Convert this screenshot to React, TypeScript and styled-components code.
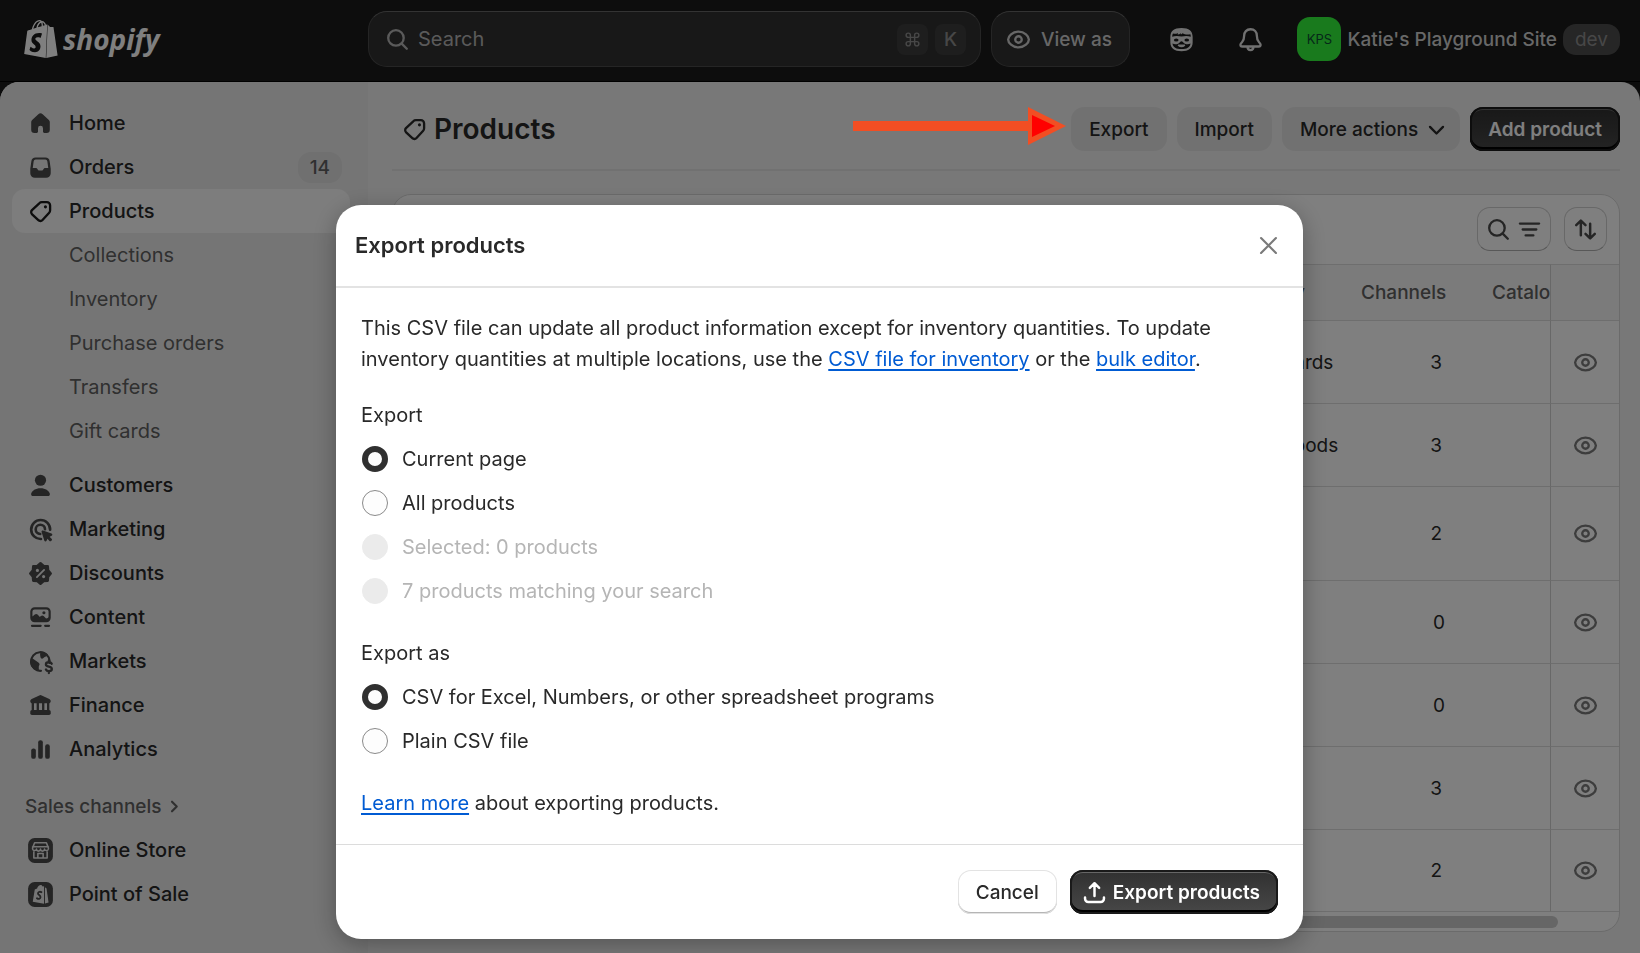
import React, { useState } from "react";
import styled, { createGlobalStyle, css } from "styled-components";
import { SiShopify } from "react-icons/si";
import { Command } from "lucide-react";

const GlobalStyle = createGlobalStyle`
  *, *::before, *::after { box-sizing: border-box; }
  body {
    margin: 0;
    background: #1a1a1a;
    color: #292929;
    font-family: Inter, "Liberation Sans", sans-serif;
    font-size: 20px;
    line-height: 31px;
  }
  button, input { font: inherit; color: inherit; }
  button { cursor: pointer; }
  svg { display: block; flex: none; }
`;

/* ---------- icons ---------- */

type IconProps = { size?: number };

const Glyph = ({ size = 31, children }: IconProps & { children: React.ReactNode }) => (
  <svg width={size} height={size} viewBox="0 0 20 20" fill="currentColor" aria-hidden="true">
    {children}
  </svg>
);

const line = {
  fill: "none",
  stroke: "currentColor",
  strokeWidth: 1.5,
  strokeLinecap: "round" as const,
  strokeLinejoin: "round" as const,
};

const HomeIcon = () => (
  <Glyph>
    <path d="M8.6 4.1a2 2 0 0 1 2.8 0l4 3.6c.4.4.6.9.6 1.4v4.9a2.1 2.1 0 0 1-2.1 2.1h-1.4a.9.9 0 0 1-.9-.9v-2.2a1.6 1.6 0 0 0-3.2 0v2.2a.9.9 0 0 1-.9.9H6.1A2.1 2.1 0 0 1 4 14V9.100c0-.5.2-1 .6-1.400z" />
  </Glyph>
);

const OrdersIcon = () => (
  <Glyph>
    <path
      fillRule="evenodd"
      d="M6.900 3.500h6.200a2.800 2.800 0 0 1 2.800 2.400l.6 4.200c.1.400.1.700.1 1.100v2.500a2.900 2.900 0 0 1-2.900 2.900H6.300a2.900 2.900 0 0 1-2.900-2.900v-2.500c0-.4 0-.7.1-1.100l.6-4.200a2.800 2.800 0 0 1 2.800-2.400zM6.900 4.900a1.300 1.300 0 0 0-1.300 1.100l-.6 4.300h1.800c.6 0 1.100.3 1.300.8.3.6.6.8 1.100.8h1.600c.5 0 .8-.2 1.100-.8.2-.5.7-.8 1.300-.8H15l-.6-4.300a1.300 1.300 0 0 0-1.300-1.100z"
    />
  </Glyph>
);

const TagIcon = ({ size }: IconProps) => (
  <Glyph size={size}>
    <path
      {...line}
      d="M10.900 4h3.200a2.100 2.100 0 0 1 2.100 2.100v3.100c0 .6-.2 1.200-.6 1.600l-4.300 4.700a1.900 1.900 0 0 1-2.700.1l-4-3.800a1.900 1.900 0 0 1-.1-2.700l4.700-4.400c.5-.5 1.100-.7 1.700-.7z"
    />
    <circle cx="13.200" cy="7" r="1" />
  </Glyph>
);

const PersonIcon = () => (
  <Glyph>
    <circle cx="10" cy="6.600" r="3.600" />
    <path d="M10 11.700c3.300 0 5.400 1.600 6 3.400.3 1-.4 1.700-1.300 1.700H5.300c-.9 0-1.600-.7-1.300-1.700.6-1.800 2.700-3.400 6-3.400z" />
  </Glyph>
);

const MarketingIcon = () => (
  <Glyph>
    <g {...line} strokeWidth={1.700}>
      <path d="M10.300 16.100a6.100 6.100 0 1 1 5.900-6" />
      <path d="M9.800 12.900a3 3 0 1 1 3.100-3.100" />
    </g>
    <path d="M10.700 11.600c-.2-.6.3-1.100.9-.9l5.500 1.900c.7.200.7 1.100.1 1.400l-1.300.7 1.400 1.500c.2.200.2.600 0 .8l-.6.5c-.2.200-.6.200-.8 0l-1.400-1.500-.6 1.300c-.3.700-1.200.6-1.400 0z" />
  </Glyph>
);

const badgePoints = Array.from({ length: 16 }, (_, i) => {
  const r = i % 2 ? 5.3 : 6.6;
  const a = (i * Math.PI) / 8;
  return `${(10 + r * Math.sin(a)).toFixed(2)},${(10 - r * Math.cos(a)).toFixed(2)}`;
}).join(" ");

const DiscountIcon = () => (
  <Glyph>
    <polygon points={badgePoints} stroke="currentColor" strokeWidth="1.600" strokeLinejoin="round" />
    <g fill="#ebebeb">
      <circle cx="8" cy="8" r="1" />
      <circle cx="12" cy="12" r="1" />
      <path d="M12.300 7.700l-4.600 4.600" stroke="#ebebeb" strokeWidth="1.200" strokeLinecap="round" />
    </g>
  </Glyph>
);

const ContentIcon = () => (
  <Glyph>
    <path
      fillRule="evenodd"
      d="M6.200 3.400h7.600a2.800 2.800 0 0 1 2.800 2.800v4a2.800 2.800 0 0 1-2.800 2.800H6.200a2.800 2.800 0 0 1-2.800-2.800v-4a2.800 2.800 0 0 1 2.800-2.800zm0 1.400a1.400 1.400 0 0 0-1.400 1.400v3.200l1.500-1.300c.6-.5 1.300-.5 1.800 0l1.500 1.500.6-.5c.6-.5 1.300-.5 1.800 0l1.600 1.500c.9-.1 1.600-.3 1.600-1.200V6.200a1.400 1.400 0 0 0-1.400-1.400z"
    />
    <circle cx="12.200" cy="6.900" r="1" />
    <path {...line} strokeWidth={1.400} d="M4.500 15.400h5.600M13 15.400h2.500" />
  </Glyph>
);

const MarketsIcon = () => (
  <Glyph>
    <circle {...line} strokeWidth={1.400} strokeDasharray="29.500 12" transform="rotate(86 9.900 10)" cx="9.900" cy="10" r="6" />
    <path d="M4.200 7.600l4 2.700c.5.400 1.300.9 1.200 1.700-.1.600-.5.800-.5 1.400v2.700c-3.400-.4-5.600-3-5.600-6.100 0-.9.3-1.700.9-2.400z" />
    <path d="M10.300 3.600c2 0 3.500.9 4.500 2.100-.6 1.300-1.900 1-2.900 2-.7.800-1.700.5-1.900-.4-.3-1.300-.5-2.600.3-3.700z" />
    <path {...line} strokeWidth={1.500} d="M17.200 11.400c-.4-.7-1-.9-1.800-.9-1.100 0-1.900.5-1.900 1.400 0 2 3.800.9 3.800 2.900 0 .9-.8 1.400-1.900 1.400-.9 0-1.600-.3-1.900-1M15.400 9.300v1.200M15.400 16.200v1.200" />
  </Glyph>
);

const FinanceIcon = () => (
  <Glyph>
    <path d="M9.200 3.500a1.800 1.800 0 0 1 1.600 0l4.900 2.300c.6.300.9.800.9 1.400 0 .8-.6 1.400-1.300 1.400H4.700c-.7 0-1.300-.6-1.300-1.400 0-.6.300-1.100.9-1.400z" />
    <path d="M4.300 8.400h1.500v5H4.300zM7.500 8.400H9v5H7.500zM11 8.400h1.500v5H11zM14.200 8.400h1.500v5h-1.500z" />
    <rect x="3.400" y="12.900" width="13.200" height="3.200" rx="1.100" />
  </Glyph>
);

const AnalyticsIcon = () => (
  <Glyph>
    <rect x="4" y="9.300" width="3" height="6.700" rx="1.400" />
    <rect x="8.500" y="4" width="3" height="12" rx="1.400" />
    <rect x="13" y="6.600" width="3" height="9.400" rx="1.400" />
  </Glyph>
);

const StoreIcon = () => (
  <Glyph>
    <rect x="2" y="2" width="16" height="16" rx="4.200" />
    <g {...line} stroke="#ebebeb" strokeWidth={1}>
      <path d="M6.200 5h7.600l1.300 3.300v.8a1.300 1.300 0 0 1-2.500 0 1.300 1.300 0 0 1-2.600 0 1.300 1.300 0 0 1-2.600 0 1.300 1.300 0 0 1-2.500 0v-.8zM4.900 7.600h10.200M5.700 10.800v4h8.600v-4M8.300 14.600v-2.700h3.400v2.700" />
    </g>
  </Glyph>
);

const BagIcon = () => (
  <Glyph>
    <rect x="2" y="2" width="16" height="16" rx="4.200" />
    <path fill="#ebebeb" d="M6.300 6.700l1.500-.5c.4-1.500 1.300-2.300 2.400-2.300.5 0 .9.400 1.200 1l.9-.2v11.200l-7.300-1.300z" />
    <path fill="#ebebeb" d="M12.900 5.300l1 .9 1.300 9-2.300.6z" />
    <path {...line} strokeWidth={1.200} d="M10.600 8.500c-1.200-.6-2.300 0-2.200.9.100 1 1.700 1.100 1.600 2.400-.1 1.100-1.400 1.300-2.300.6" />
  </Glyph>
);

const SearchIcon = ({ size }: IconProps) => (
  <Glyph size={size}>
    <circle {...line} cx="9" cy="9" r="5" />
    <path {...line} d="M12.700 12.700l3.300 3.300" />
  </Glyph>
);

const EyeIcon = ({ size }: IconProps) => (
  <Glyph size={size}>
    <path {...line} d="M10 4.900c3.900 0 6.700 3 6.700 5.100s-2.800 5.100-6.700 5.100S3.300 12.100 3.300 10 6.100 4.900 10 4.900z" />
    <circle {...line} cx="10" cy="10" r="2.100" />
  </Glyph>
);

const SidekickIcon = () => (
  <Glyph size={31}>
    <path
      fillRule="evenodd"
      d="M10 2.600c4.900 0 7.200 2 7.200 5.800v3.600c0 3.800-2.700 5.600-7.200 5.600s-7.200-1.800-7.200-5.600V8.400c0-3.800 2.300-5.800 7.200-5.800zM4.500 6.100c-.4.700-.5 1.300-.5 2.100 1.700-.7 3.800-.7 6-.1 2.200-.6 4.300-.6 6 .1 0-.6-.1-1.100-.3-1.600-1.700.4-3.600.3-5.100-.6-.2.400-.6.700-1 .8v-.9c-.7.500-1.400.8-2.100.9l.2-1c-1.100.6-2.100.7-3.200.3zM4.200 12.600c.3 2.600 2.400 3.600 5.800 3.600s5.500-1 5.800-3.600c-1.600.9-3.900.5-4.900-1-.5-.6-1.300-.6-1.800 0-1 1.500-3.300 1.900-4.900 1z"
    />
    <ellipse cx="6.600" cy="10.300" rx="1.500" ry="1" fill="#1a1a1a" />
    <ellipse cx="13.400" cy="10.300" rx="1.500" ry="1" fill="#1a1a1a" />
    <path {...line} strokeWidth={1.200} d="M8.200 13.800c1 .9 2.600.9 3.600 0z" />
  </Glyph>
);

const BellIcon = () => (
  <Glyph size={31}>
    <path {...line} d="M10 3.400c2.500 0 4.100 1.800 4.100 4.200 0 1.900.4 3.200 1.400 4.200.7.700 1 1.100 1 1.600 0 .7-.5 1.100-1.200 1.100H4.700c-.7 0-1.200-.4-1.200-1.100 0-.5.3-.9 1-1.600 1-1 1.400-2.300 1.400-4.200 0-2.400 1.600-4.200 4.100-4.200zM8.100 14.700c0 1.300.8 2.100 1.900 2.100s1.900-.8 1.900-2.100" />
  </Glyph>
);

const ChevronDown = () => (
  <Glyph size={31}>
    <path {...line} d="M5.800 8.300l4.200 4.300 4.200-4.300" />
  </Glyph>
);

const ChevronRight = () => (
  <Glyph size={25}>
    <path {...line} strokeWidth={1.700} d="M8 6.200l3.800 3.800L8 13.800" />
  </Glyph>
);

const CloseIcon = () => (
  <Glyph size={31}>
    <path {...line} strokeWidth={1.400} d="M5.200 5.200l9.600 9.600M14.800 5.200l-9.600 9.600" />
  </Glyph>
);

const FilterIcon = () => (
  <Glyph size={31}>
    <path {...line} d="M3.800 6.200h12.400M5.600 10h8.800M7.500 13.800h5" />
  </Glyph>
);

const SortIcon = () => (
  <Glyph size={31}>
    <path {...line} strokeWidth={1.600} d="M7 13.700V4.400M4 7.200l3-3 3 3M13 6.300v9.300M10 12.800l3 3 3-3" />
  </Glyph>
);

const UploadIcon = () => (
  <Glyph size={31}>
    <path {...line} strokeWidth={1.600} d="M10 12.300V4.200M7 7l3-3 3 3M3.900 13.200v.8a2.100 2.100 0 0 0 2.100 2.100h8a2.100 2.100 0 0 0 2.100-2.100v-.8" />
  </Glyph>
);

/* ---------- shell ---------- */

const Shell = styled.div`
  display: flex;
  flex-direction: column;
  height: 100vh;
  overflow: hidden;
  background: #1a1a1a;
`;

const TopBar = styled.header`
  display: grid;
  grid-template-columns: 368px minmax(200px, 613px) auto 1fr;
  align-items: center;
  column-gap: 0;
  flex: none;
  height: 82px;
  padding: 0 20px 3px 0;
  border-bottom: 1px solid #000;
  color: #e3e3e3;
`;

const Brand = styled.a`
  display: flex;
  align-items: center;
  gap: 3px;
  padding-left: 22px;
  color: #fff;
  text-decoration: none;
`;

const Wordmark = styled.span`
  font-family: "Open Sans", sans-serif;
  font-size: 28px;
  font-style: italic;
  font-weight: 700;
  line-height: 38px;
`;

const fieldFrame = css`
  height: 56px;
  border: 1px solid #4a4a4a;
  border-top-color: #666;
  border-radius: 19px;
  background: #303030;
`;

const SearchField = styled.label`
  ${fieldFrame}
  display: flex;
  align-items: center;
  gap: 5px;
  padding: 0 14px 0 13px;
  color: #b5b5b5;

  input {
    flex: 1;
    min-width: 0;
    padding: 0;
    border: 0;
    outline: 0;
    background: none;
  }
  input::placeholder { color: #b5b5b5; opacity: 1; }
`;

const Keys = styled.span`
  display: flex;
  gap: 7px;
`;

const Key = styled.kbd`
  display: flex;
  align-items: center;
  justify-content: center;
  width: 31px;
  height: 31px;
  border-radius: 8px;
  background: #3d3d3d;
  color: #8f8f8f;
  font-family: inherit;
  font-size: 19px;
  font-weight: 500;
`;

const ViewAs = styled.button`
  ${fieldFrame}
  display: flex;
  align-items: center;
  gap: 7px;
  margin-left: 10px;
  padding: 0 17px 0 11px;
  color: #cfcfcf;
  font-size: 19px;
  font-weight: 500;
`;

const Account = styled.div`
  display: flex;
  align-items: center;
  justify-content: flex-end;
  gap: 31px;
`;

const TopIcons = styled.div`
  display: flex;
  gap: 38px;
`;

const TopIcon = styled.button`
  display: flex;
  padding: 0;
  border: 0;
  background: none;
  color: #e3e3e3;
`;

const StoreButton = styled.button`
  display: flex;
  align-items: center;
  gap: 6px;
  padding: 0;
  border: 0;
  background: none;
  font-size: 19px;
  font-weight: 500;
  white-space: nowrap;
  color: #d0d0d0;
`;

const Avatar = styled.span`
  display: flex;
  align-items: center;
  justify-content: center;
  width: 44px;
  height: 44px;
  border-radius: 13px;
  background: #33f53b;
  color: #0c5132;
  font-size: 13px;
  font-weight: 400;
`;

const EnvTag = styled.span`
  padding: 0 12px;
  border-radius: 13px;
  background: #4d4d4d;
  color: #8f8f8f;
  font-weight: 400;
`;

const Body = styled.div`
  display: flex;
  flex: 1;
  min-height: 0;
  overflow: hidden;
  border-radius: 19px 19px 0 0;
  background: #f1f1f1;
`;

/* ---------- sidebar ---------- */

const Sidebar = styled.nav`
  flex: none;
  width: 368px;
  padding: 19px 18px 0 12px;
  background: #ebebeb;
`;

const NavList = styled.ul`
  margin: 0 0 10px;
  padding: 0;
  list-style: none;
`;

const NavLink = styled.a<{ $active?: boolean; $sub?: boolean }>`
  display: flex;
  align-items: center;
  gap: 13px;
  height: 44px;
  padding: 0 8px 0 ${(p) => (p.$sub ? "57px" : "13px")};
  border-radius: 13px;
  background: ${(p) => (p.$active ? "#fafafa" : "transparent")};
  color: ${(p) => (p.$sub ? "#616161" : "#292929")};
  font-weight: ${(p) => (p.$sub ? 400 : 500)};
  text-decoration: none;

  svg { color: ${(p) => (p.$active ? "#1a1a1a" : "#4a4a4a")}; }
`;

const Count = styled.span`
  margin-left: auto;
  padding: 0 12px;
  border-radius: 13px;
  background: #e0e0e0;
  color: #616161;
  font-size: 19px;
`;

const NavHeading = styled.button<{ $spaced?: boolean }>`
  display: flex;
  align-items: center;
  height: 44px;
  margin-top: ${(p) => (p.$spaced ? 22 : 13)}px;
  padding: 0 13px;
  border: 0;
  background: none;
  color: #616161;
  font-size: 19px;
  font-weight: 500;
`;

/* ---------- main page ---------- */

const Main = styled.main`
  flex: 1;
  min-width: 0;
  padding: 0 20px 0 24px;
`;

const PageHeader = styled.div`
  display: flex;
  align-items: center;
  justify-content: space-between;
  height: 89px;
  padding: 7px 0 0 7px;
  border-bottom: 2px solid #e3e3e3;
`;

const PageTitle = styled.h1`
  display: flex;
  align-items: center;
  gap: 4px;
  margin: 0;
  font-size: 28px;
  font-weight: 600;
`;

const Actions = styled.div`
  position: relative;
  display: flex;
  gap: 10px;
`;

const Arrow = styled.svg`
  position: absolute;
  z-index: 20;
  top: 0;
  right: calc(100% + 5px);
`;

const Button = styled.button<{ $kind?: "plain" | "primary" | "outline" }>`
  display: flex;
  align-items: center;
  justify-content: center;
  gap: 3px;
  height: 44px;
  padding: 0 18px;
  border: 0;
  border-radius: 13px;
  background: #e3e3e3;
  font-size: 19px;
  font-weight: 500;
  white-space: nowrap;

  ${(p) =>
    p.$kind === "primary" &&
    css`
      background: linear-gradient(#303030, #484848);
      box-shadow: inset 0 0 0 2px #1a1a1a, inset 0 -3px 0 1px #000, inset 0 3px 0 #666;
      color: #fff;
      font-weight: 600;
    `}
  ${(p) =>
    p.$kind === "outline" &&
    css`
      background: #fff;
      box-shadow: inset 0 0 0 1px #e3e3e3, inset 0 -2px 0 #b5b5b5;
    `}
`;

const MenuButton = styled(Button)`
  padding-right: 8px;
`;

const UploadButton = styled(Button)`
  padding-left: 9px;
`;

const Card = styled.section`
  margin-top: 23px;
  overflow: hidden;
  border: 1px solid #d6d6d6;
  border-radius: 19px;
  background: #fff;
`;

const CardTools = styled.div`
  display: flex;
  justify-content: flex-end;
  gap: 13px;
  padding: 12px 12px 13px;
`;

const ToolButton = styled.button`
  display: flex;
  align-items: center;
  height: 44px;
  padding: 0 5px;
  border: 1px solid #d0d0d0;
  border-bottom-color: #b0b0b0;
  border-radius: 13px;
  background: #fff;
  color: #4a4a4a;
`;

const ProductTable = styled.table`
  width: 100%;
  border-collapse: separate;
  border-spacing: 0;
  table-layout: fixed;

  th, td {
    padding: 0;
    border-top: 1px solid #dcdcdc;
    text-align: left;
    white-space: nowrap;
  }
  th {
    height: 56px;
    overflow: hidden;
    background: #f7f7f7;
    color: #616161;
    font-size: 19px;
    font-weight: 500;
  }
  td { font-size: 19px; }
  th:last-child, td:last-child { border-left: 1px solid #d0d0d0; }
  tbody tr:last-child td { border-bottom: 1px solid #dcdcdc; }
`;

const Row = styled.tr<{ $tall?: boolean }>`
  height: ${(p) => (p.$tall ? 94 : 83)}px;
`;

const ChannelCount = styled.span<{ $linked: boolean }>`
  display: block;
  width: 84px;
  padding-right: ${(p) => (p.$linked ? 3 : 0)}px;
  text-align: right;
`;

const Preview = styled.button`
  display: flex;
  margin: 0 auto;
  padding: 0;
  border: 0;
  background: none;
  color: #7a7a7a;
`;

const ScrollTrack = styled.div`
  padding: 4px 61px 3px 6px;
`;

const ScrollThumb = styled.div`
  height: 12px;
  border-radius: 6px;
  background: #cccccc;
`;

/* ---------- dialog ---------- */

const Scrim = styled.div`
  position: fixed;
  inset: 0;
  z-index: 10;
  display: flex;
  align-items: flex-start;
  justify-content: center;
  padding: 205px 21px 0 20px;
  background: rgba(0, 0, 0, 0.5);
`;

const Dialog = styled.form`
  width: 100%;
  max-width: 967px;
  border-radius: 25px;
  background: #fff;
  box-shadow: 0 6px 24px rgba(0, 0, 0, 0.3);
`;

const DialogHeader = styled.div`
  display: flex;
  align-items: center;
  justify-content: space-between;
  height: 83px;
  padding: 0 19px;
  border-bottom: 2px solid #e3e3e3;

  h2 {
    margin: 0;
    font-size: 22px;
    font-weight: 600;
  }
`;

const CloseButton = styled.button`
  display: flex;
  padding: 0;
  border: 0;
  background: none;
  color: #7a7a7a;
`;

const DialogBody = styled.div`
  display: flex;
  flex-direction: column;
  gap: 25px;
  padding: 25px;

  p { margin: 0; }
  a { color: #005bd3; text-underline-offset: 3px; }
`;

const Choices = styled.fieldset`
  min-width: 0;
  margin: 0;
  padding: 0;
  border: 0;

  legend {
    padding: 0;
    margin-bottom: 6px;
  }
`;

const Choice = styled.label<{ $disabled?: boolean }>`
  display: flex;
  align-items: center;
  gap: 14px;
  height: 44px;
  padding-left: 1px;
  color: ${(p) => (p.$disabled ? "#b5b5b5" : "inherit")};

  input {
    appearance: none;
    width: 26px;
    height: 26px;
    margin: 0;
    border: 1px solid #8a8a8a;
    border-radius: 50%;
    background: #fdfdfd;
  }
  input:checked { border: 6px solid #303030; }
  input:disabled { border-color: #ebebeb; background: #ebebeb; }
`;

const DialogFooter = styled.div`
  display: flex;
  justify-content: flex-end;
  gap: 13px;
  padding: 25px;
  border-top: 1px solid #dcdcdc;
`;

/* ---------- data ---------- */

type NavItem = { label: string; icon?: React.ReactNode; count?: number; active?: boolean };

const primaryNav: NavItem[] = [
  { label: "Home", icon: <HomeIcon /> },
  { label: "Orders", icon: <OrdersIcon />, count: 14 },
  { label: "Products", icon: <TagIcon />, active: true },
  { label: "Collections" },
  { label: "Inventory" },
  { label: "Purchase orders" },
  { label: "Transfers" },
  { label: "Gift cards" },
];

const secondaryNav: NavItem[] = [
  { label: "Customers", icon: <PersonIcon /> },
  { label: "Marketing", icon: <MarketingIcon /> },
  { label: "Discounts", icon: <DiscountIcon /> },
  { label: "Content", icon: <ContentIcon /> },
  { label: "Markets", icon: <MarketsIcon /> },
  { label: "Finance", icon: <FinanceIcon /> },
  { label: "Analytics", icon: <AnalyticsIcon /> },
];

const channelNav: NavItem[] = [
  { label: "Online Store", icon: <StoreIcon /> },
  { label: "Point of Sale", icon: <BagIcon /> },
];

const products = [
  { category: "Snowboards", channels: 3 },
  { category: "Home Goods", channels: 3 },
  { category: "", channels: 2, tall: true },
  { category: "", channels: 0 },
  { category: "", channels: 0 },
  { category: "", channels: 3 },
  { category: "", channels: 2 },
];

const scopeOptions = [
  { value: "page", label: "Current page" },
  { value: "all", label: "All products" },
  { value: "selected", label: "Selected: 0 products", disabled: true },
  { value: "search", label: "7 products matching your search", disabled: true },
];

const formatOptions = [
  { value: "excel", label: "CSV for Excel, Numbers, or other spreadsheet programs" },
  { value: "plain", label: "Plain CSV file" },
];

/* ---------- composed parts ---------- */

const Nav = ({ items }: { items: NavItem[] }) => (
  <NavList>
    {items.map((item) => (
      <li key={item.label}>
        <NavLink href="#" $active={item.active} $sub={!item.icon}>
          {item.icon}
          {item.label}
          {item.count && <Count>{item.count}</Count>}
        </NavLink>
      </li>
    ))}
  </NavList>
);

type Option = { value: string; label: string; disabled?: boolean };

const RadioGroup = ({ title, name, options }: { title: string; name: string; options: Option[] }) => {
  const [value, setValue] = useState(options[0].value);
  return (
    <Choices>
      <legend>{title}</legend>
      {options.map((o) => (
        <Choice key={o.value} $disabled={o.disabled}>
          <input
            type="radio"
            name={name}
            value={o.value}
            checked={value === o.value}
            disabled={o.disabled}
            onChange={() => setValue(o.value)}
          />
          {o.label}
        </Choice>
      ))}
    </Choices>
  );
};

export default function App() {
  return (
    <>
      <GlobalStyle />
      <Shell>
        <TopBar>
          <Brand href="#">
            <SiShopify size={38} aria-hidden="true" />
            <Wordmark>shopify</Wordmark>
          </Brand>
          <SearchField>
            <SearchIcon size={31} />
            <input type="search" placeholder="Search" aria-label="Search" />
            <Keys>
              <Key><Command size={17} /></Key>
              <Key>K</Key>
            </Keys>
          </SearchField>
          <ViewAs type="button">
            <EyeIcon size={31} />
            View as
          </ViewAs>
          <Account>
            <TopIcons>
              <TopIcon type="button" aria-label="Sidekick"><SidekickIcon /></TopIcon>
              <TopIcon type="button" aria-label="Notifications"><BellIcon /></TopIcon>
            </TopIcons>
            <StoreButton type="button">
              <Avatar>KPS</Avatar>
              Katie's Playground Site
              <EnvTag>dev</EnvTag>
            </StoreButton>
          </Account>
        </TopBar>

        <Body>
          <Sidebar aria-label="Main">
            <Nav items={primaryNav} />
            <Nav items={secondaryNav} />
            <NavHeading type="button">Sales channels <ChevronRight /></NavHeading>
            <Nav items={channelNav} />
            <NavHeading type="button" $spaced>Apps <ChevronRight /></NavHeading>
          </Sidebar>

          <Main>
            <PageHeader>
              <PageTitle><TagIcon size={31} />Products</PageTitle>
              <Actions>
                <Arrow width="213" height="38" viewBox="0 0 213 38" aria-hidden="true">
                  <path fill="#f24e23" d="M0 14h175V0l38 19-38 19V24H0z" />
                  <path fill="#f00" d="M179 8l23 11-23 11z" />
                </Arrow>
                <Button type="button">Export</Button>
                <Button type="button">Import</Button>
                <MenuButton type="button">More actions <ChevronDown /></MenuButton>
                <Button type="button" $kind="primary">Add product</Button>
              </Actions>
            </PageHeader>

            <Card>
              <CardTools>
                <ToolButton type="button" aria-label="Search and filter">
                  <SearchIcon size={31} />
                  <FilterIcon />
                </ToolButton>
                <ToolButton type="button" aria-label="Sort"><SortIcon /></ToolButton>
              </CardTools>
              <ProductTable>
                <colgroup>
                  <col />
                  <col width="140" />
                  <col width="131" />
                  <col width="58" />
                  <col width="69" />
                </colgroup>
                <thead>
                  <tr>
                    <th />
                    <th scope="col">Category</th>
                    <th scope="col">Channels</th>
                    <th scope="col">Catalogs</th>
                    <th />
                  </tr>
                </thead>
                <tbody>
                  {products.map((p, i) => (
                    <Row key={i} $tall={p.tall}>
                      <td />
                      <td>{p.category}</td>
                      <td><ChannelCount $linked={p.channels > 0}>{p.channels}</ChannelCount></td>
                      <td />
                      <td><Preview type="button" aria-label="Preview on Online Store"><EyeIcon size={31} /></Preview></td>
                    </Row>
                  ))}
                </tbody>
              </ProductTable>
              <ScrollTrack><ScrollThumb /></ScrollTrack>
            </Card>
          </Main>
        </Body>
      </Shell>

      <Scrim>
        <Dialog role="dialog" aria-modal="true" aria-labelledby="export-title" onSubmit={(e) => e.preventDefault()}>
          <DialogHeader>
            <h2 id="export-title">Export products</h2>
            <CloseButton type="button" aria-label="Close"><CloseIcon /></CloseButton>
          </DialogHeader>
          <DialogBody>
            <p>
              This CSV file can update all product information except for inventory quantities. To update
              inventory quantities at multiple locations, use the <a href="#">CSV file for inventory</a> or
              the <a href="#">bulk editor</a>.
            </p>
            <RadioGroup title="Export" name="scope" options={scopeOptions} />
            <RadioGroup title="Export as" name="format" options={formatOptions} />
            <p><a href="#">Learn more</a> about exporting products.</p>
          </DialogBody>
          <DialogFooter>
            <Button type="button" $kind="outline">Cancel</Button>
            <UploadButton type="submit" $kind="primary"><UploadIcon />Export products</UploadButton>
          </DialogFooter>
        </Dialog>
      </Scrim>
    </>
  );
}
